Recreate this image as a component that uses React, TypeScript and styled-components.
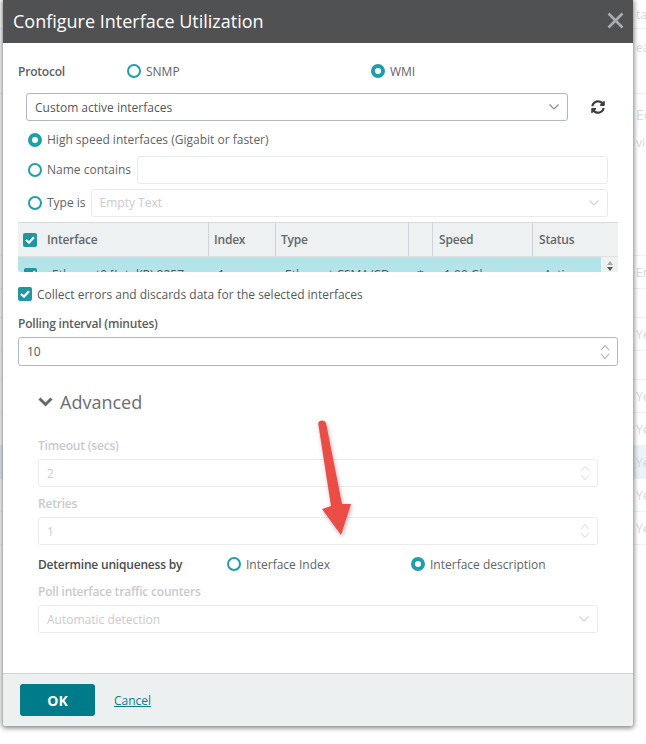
import React from "react";
import styled, { createGlobalStyle } from "styled-components";

const Global = createGlobalStyle`
  html, body { margin: 0; padding: 0; background: #fff; }
  body { font-family: "Open Sans", "Liberation Sans", sans-serif; font-size: 12px; color: #555a5f; }
`;

const Page = styled.div`
  position: relative;
  width: 646px;
  height: 744px;
  overflow: hidden;
  background: #fff;
`;

const Backdrop = styled.div`
  width: 646px;
  display: flex;
  flex-direction: column;
`;

const BackRow = styled.div<{ $h: number; $line?: boolean; $blue?: boolean; $size?: number; $color?: string; $x?: number }>`
  height: ${(p) => p.$h}px;
  box-sizing: border-box;
  display: flex;
  align-items: center;
  padding-left: ${(p) => p.$x ?? 636}px;
  white-space: nowrap;
  overflow: hidden;
  font-size: ${(p) => p.$size ?? 12}px;
  color: ${(p) => p.$color ?? "#d6d8da"};
  background: ${(p) => (p.$blue ? "#e9f3f9" : "transparent")};
  border-bottom: ${(p) => (p.$line ? "1px solid #f0f1f2" : "none")};
`;

const Dialog = styled.div`
  position: absolute;
  left: 3px;
  top: 0;
  width: 630px;
  height: 726px;
  background: #fff;
  display: flex;
  flex-direction: column;
  box-shadow: 0 1px 5px 1px rgba(0, 0, 0, 0.5);
  border-radius: 0 0 3px 3px;
`;

const Header = styled.header`
  height: 43px;
  flex: none;
  box-sizing: border-box;
  background: #505152;
  display: flex;
  align-items: center;
  justify-content: space-between;
  padding: 0 9px 2px 10px;
`;

const Title = styled.h1`
  margin: 0;
  font-size: 18px;
  font-weight: 400;
  color: #fff;
`;

const CloseIcon = styled.svg`
  width: 17px;
  height: 17px;
  stroke: #a9adb0;
  stroke-width: 2.6;
  fill: none;
`;

const Body = styled.main`
  flex: 1;
  padding: 0 15px;
  position: relative;
`;

const ProtocolRow = styled.div`
  display: grid;
  grid-template-columns: 109px 244px auto;
  height: 20px;
  margin-top: 18px;
  align-items: center;
`;

const BoldLabel = styled.span<{ $dark?: boolean }>`
  font-weight: 600;
  font-size: 12px;
  letter-spacing: -0.2px;
  color: ${(p) => (p.$dark ? "#4a4d50" : "#5d6063")};
`;

const Radio = styled.span<{ $checked?: boolean }>`
  flex: none;
  box-sizing: border-box;
  width: 14px;
  height: 14px;
  border-radius: 50%;
  border: ${(p) => (p.$checked ? "4.5px" : "2px")} solid #1f9fa9;
  background: #fff;
`;

const RadioItem = styled.label`
  display: inline-flex;
  align-items: center;
  gap: 5px;
  font-size: 12px;
  color: #5f6367;
  white-space: nowrap;
`;

const SelectRow = styled.div`
  display: flex;
  align-items: center;
  margin: 12px 0 0 8px;
  gap: 23px;
`;

const Field = styled.div<{ $w?: number; $h?: number; $disabled?: boolean; $flex?: boolean; $top?: number }>`
  box-sizing: border-box;
  width: ${(p) => (p.$w ? `${p.$w}px` : "auto")};
  flex: ${(p) => (p.$flex ? 1 : "none")};
  height: ${(p) => p.$h ?? 28}px;
  margin-top: ${(p) => p.$top ?? 0}px;
  border: 1px solid ${(p) => (p.$disabled ? "#e8eaeb" : "#b0b7bb")};
  border-radius: 3px;
  background: #fff;
  display: flex;
  align-items: center;
  justify-content: space-between;
  padding: 0 8px;
  font-size: 12px;
  color: ${(p) => (p.$disabled ? "#c9cbcd" : "#54585c")};
`;

const Chevron = styled.svg<{ $disabled?: boolean }>`
  width: 10px;
  height: 6px;
  fill: none;
  stroke: ${(p) => (p.$disabled ? "#d0d3d6" : "#858a8e")};
  stroke-width: 1.1;
`;

const Spin = styled.svg<{ $disabled?: boolean }>`
  width: 10px;
  height: 16px;
  fill: none;
  stroke: ${(p) => (p.$disabled ? "#dcdfe1" : "#a4a9ad")};
  stroke-width: 1.1;
  margin-right: -1px;
`;

const RefreshIcon = styled.svg`
  width: 14px;
  height: 14px;
  fill: #3d4043;
`;

const FilterRow = styled.div<{ $top: number; $gap?: number }>`
  display: flex;
  align-items: center;
  margin: ${(p) => p.$top}px 0 0 10px;
  width: 580px;
  height: 29px;
  gap: ${(p) => p.$gap ?? 6}px;
`;

const Table = styled.div`
  margin-top: 5px;
  height: 50px;
  border-top: 1px solid #d5dadc;
  box-sizing: border-box;
  overflow: hidden;
  position: relative;
  border-radius: 0 0 3px 3px;
`;

const GridRow = styled.div<{ $selected?: boolean }>`
  display: grid;
  grid-template-columns: 191px 67px 133px 24px 100px 85px;
  height: ${(p) => (p.$selected ? 30 : 34)}px;
  box-sizing: border-box;
  background: ${(p) => (p.$selected ? "#b2e4ea" : "#eef1f2")};
  border-bottom: ${(p) => (p.$selected ? "none" : "1px solid #dde1e3")};
`;

const HeadCell = styled.div<{ $last?: boolean; $pad?: number }>`
  display: flex;
  align-items: center;
  gap: 10px;
  padding-left: ${(p) => p.$pad ?? 5}px;
  border-right: ${(p) => (p.$last ? "none" : "1px solid #cdd3d6")};
  font-size: 12px;
  font-weight: 600;
  letter-spacing: -0.2px;
  color: #63676b;
`;

const Cell = styled.div<{ $pad?: number; $accent?: boolean }>`
  display: flex;
  align-items: center;
  gap: 15px;
  padding-left: ${(p) => p.$pad ?? 9}px;
  padding-top: 4px;
  font-size: 12px;
  color: ${(p) => (p.$accent ? "#1b7d8c" : "#53585c")};
  white-space: nowrap;
  overflow: hidden;
`;

const Check = styled.span<{ $size?: number }>`
  flex: none;
  width: ${(p) => p.$size ?? 14}px;
  height: ${(p) => p.$size ?? 14}px;
  background: #1f96a0;
  border-radius: 2px;
  display: inline-flex;
  align-items: center;
  justify-content: center;
  svg { width: 10px; height: 8px; fill: none; stroke: #fff; stroke-width: 2.2; }
`;

const Scrollbar = styled.div`
  position: absolute;
  right: 0;
  top: 34px;
  width: 17px;
  height: 16px;
  background: #eef1f2;
  display: flex;
  flex-direction: column;
  align-items: center;
  gap: 2px;
  padding-top: 4px;
  box-sizing: border-box;
`;

const Tri = styled.span<{ $down?: boolean }>`
  width: 0;
  height: 0;
  border-left: 3.5px solid transparent;
  border-right: 3.5px solid transparent;
  ${(p) => (p.$down ? "border-top: 4px solid #55585b;" : "border-bottom: 4px solid #a4a8ab;")}
`;

const CollectRow = styled.label`
  display: flex;
  align-items: center;
  gap: 5px;
  margin-top: 15px;
  height: 14px;
  font-size: 12px;
  color: #55595d;
`;

const StackLabel = styled.div<{ $top: number; $muted?: boolean }>`
  margin-top: ${(p) => p.$top}px;
  height: 17px;
  line-height: 17px;
  font-size: 12px;
  font-weight: 600;
  letter-spacing: -0.2px;
  color: ${(p) => (p.$muted ? "#c8cacc" : "#5a5d60")};
`;

const Advanced = styled.section`
  padding: 0 20px;
`;

const AdvancedHead = styled.h2`
  margin: 24px 0 0 0;
  height: 24px;
  display: flex;
  align-items: center;
  gap: 7px;
  font-size: 18px;
  font-weight: 400;
  color: #6a6d70;
  svg { width: 15px; height: 10px; fill: none; stroke: #66696c; stroke-width: 3; }
`;

const UniqueRow = styled.div`
  display: grid;
  grid-template-columns: 189px 184px auto;
  align-items: center;
  margin-top: 10px;
  height: 18px;
`;

const Footer = styled.footer`
  height: 53px;
  flex: none;
  box-sizing: border-box;
  background: #edf0f1;
  border-top: 1px solid #cfd6d8;
  border-radius: 0 0 3px 3px;
  display: flex;
  align-items: center;
  padding: 0 17px;
  gap: 19px;
`;

const OkButton = styled.button`
  width: 75px;
  height: 32px;
  border: none;
  border-radius: 3px;
  background: #007b8a;
  color: #fff;
  font-family: inherit;
  font-size: 14px;
  font-weight: 700;
`;

const CancelLink = styled.a`
  font-size: 12px;
  color: #0a7c8c;
  text-decoration: underline;
`;

const Arrow = styled.svg`
  position: absolute;
  left: 315px;
  top: 415px;
  width: 45px;
  height: 130px;
  overflow: visible;
  filter: drop-shadow(1px 2px 2px rgba(0, 0, 0, 0.3));
`;

const ChevronDown = ({ disabled }: { disabled?: boolean }) => (
  <Chevron viewBox="0 0 10 6" $disabled={disabled}><path d="M0.5 0.5 L5 5 L9.5 0.5" /></Chevron>
);
const Spinner = ({ disabled }: { disabled?: boolean }) => (
  <Spin viewBox="0 0 10 16" $disabled={disabled}><path d="M1 6 L5 1.5 L9 6 M1 10 L5 14.5 L9 10" /></Spin>
);
const Tick = () => (
  <svg viewBox="0 0 10 8"><path d="M1 4 L4 6.6 L9 1.2" /></svg>
);

const App = () => (
  <Page>
    <Global />
    <Backdrop>
      <BackRow $h={29} $line>tat</BackRow>
      <BackRow $h={36}>ea</BackRow>
      <BackRow $h={29} $line />
      <BackRow $h={40} $size={14} $color="#cfe0e5">Ed</BackRow>
      <BackRow $h={16}>vic</BackRow>
      <BackRow $h={106} $line />
      <BackRow $h={33} $line>Ena</BackRow>
      <BackRow $h={29} $line />
      <BackRow $h={33} $line>Yes</BackRow>
      <BackRow $h={29} $line />
      <BackRow $h={33} $line>Yes</BackRow>
      <BackRow $h={33} $line>Yes</BackRow>
      <BackRow $h={33} $blue>Yes</BackRow>
      <BackRow $h={33} $line>Yes</BackRow>
      <BackRow $h={33} $line>Yes</BackRow>
    </Backdrop>
    <Dialog>
      <Header>
        <Title>Configure Interface Utilization</Title>
        <CloseIcon viewBox="0 0 17 17"><path d="M1.5 1.5 L15.5 15.5 M15.5 1.5 L1.5 15.5" /></CloseIcon>
      </Header>
      <Body>
        <ProtocolRow>
          <BoldLabel>Protocol</BoldLabel>
          <RadioItem><Radio />SNMP</RadioItem>
          <RadioItem><Radio $checked />WMI</RadioItem>
        </ProtocolRow>
        <SelectRow>
          <Field $w={542}>
            Custom active interfaces
            <ChevronDown />
          </Field>
          <RefreshIcon viewBox="0 0 512 512">
            <path d="M370.7 133.3C339.5 104 298.9 88 255.800 88c-77.500.1-144.300 53.200-162.800 126.900-1.300 5.400-6.100 9.200-11.700 9.200H24.100c-7.500 0-13.200-6.800-11.800-14.200C33.900 94.900 134.800 8 256 8c66.400 0 126.800 26.100 171.300 68.700L463 41c15.100-15.100 41-4.400 41 17v134c0 13.300-10.700 24-24 24H346c-21.400 0-32.100-25.900-17-41zM32 296h134c21.400 0 32.100 25.900 17 41l-41.800 41.800c31.300 29.300 71.800 45.300 114.900 45.200 77.400-.1 144.300-53.100 162.800-126.800 1.300-5.400 6.100-9.200 11.700-9.200h57.300c7.500 0 13.200 6.800 11.800 14.200C478.100 417.100 377.200 504 256 504c-66.400 0-126.800-26.100-171.300-68.700L49 471c-15.100 15.100-41 4.400-41-17V320c0-13.300 10.700-24 24-24z" />
          </RefreshIcon>
        </SelectRow>
        <FilterRow $top={4}>
          <RadioItem><Radio $checked />High speed interfaces (Gigabit or faster)</RadioItem>
        </FilterRow>
        <FilterRow $top={1}>
          <RadioItem><Radio />Name contains</RadioItem>
          <Field $flex $h={28} $disabled />
        </FilterRow>
        <FilterRow $top={4} $gap={5}>
          <RadioItem><Radio />Type is</RadioItem>
          <Field $flex $h={28} $disabled>
            Empty Text
            <ChevronDown disabled />
          </Field>
        </FilterRow>
        <Table>
          <GridRow>
            <HeadCell><Check><Tick /></Check>Interface</HeadCell>
            <HeadCell>Index</HeadCell>
            <HeadCell>Type</HeadCell>
            <HeadCell />
            <HeadCell $pad={6}>Speed</HeadCell>
            <HeadCell $last $pad={6}>Status</HeadCell>
          </GridRow>
          <GridRow $selected>
            <Cell $pad={6}><Check $size={13}><Tick /></Check>Ethernet0 [Intel(R) 8257</Cell>
            <Cell>1</Cell>
            <Cell>Ethernet CSMA/CD</Cell>
            <Cell $pad={6} $accent>⚙</Cell>
            <Cell $pad={11}>1.00 Gb</Cell>
            <Cell $pad={11}>Active</Cell>
          </GridRow>
          <Scrollbar><Tri /><Tri $down /></Scrollbar>
        </Table>
        <CollectRow><Check><Tick /></Check>Collect errors and discards data for the selected interfaces</CollectRow>
        <StackLabel $top={14}>Polling interval (minutes)</StackLabel>
        <Field $h={29} $top={5}>
          10
          <Spinner />
        </Field>
        <Advanced>
          <AdvancedHead>
            <svg viewBox="0 0 15 10"><path d="M1.500 1.500 L7.500 7.500 L13.500 1.500" /></svg>
            Advanced
          </AdvancedHead>
          <StackLabel $top={23} $muted>Timeout (secs)</StackLabel>
          <Field $h={28} $disabled $top={5}>2<Spinner disabled /></Field>
          <StackLabel $top={8} $muted>Retries</StackLabel>
          <Field $h={28} $disabled $top={5}>1<Spinner disabled /></Field>
          <UniqueRow>
            <BoldLabel $dark>Determine uniqueness by</BoldLabel>
            <RadioItem><Radio />Interface Index</RadioItem>
            <RadioItem><Radio $checked />Interface description</RadioItem>
          </UniqueRow>
          <StackLabel $top={10} $muted>Poll interface traffic counters</StackLabel>
          <Field $h={28} $disabled $top={5}>
            Automatic detection
            <ChevronDown disabled />
          </Field>
        </Advanced>
      </Body>
      <Footer>
        <OkButton>OK</OkButton>
        <CancelLink>Cancel</CancelLink>
      </Footer>
    </Dialog>
    <Arrow viewBox="0 0 45 130">
      <path d="M3.300 9 C2.500 5 9.500 4 11 8 L27 89 L36 89 L26 120 L7 94 L16 91 Z" fill="#eb4d46" />
    </Arrow>
  </Page>
);

export default App;
